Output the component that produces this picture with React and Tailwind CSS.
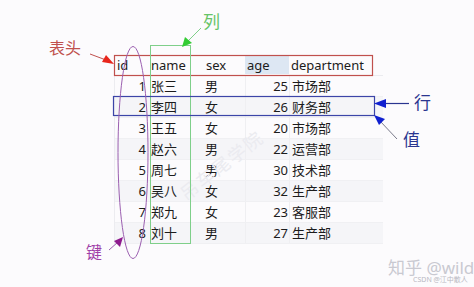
export default function App() {
  const rows = [
    [1, '张三', '男', 25, '市场部'],
    [2, '李四', '女', 26, '财务部'],
    [3, '王五', '女', 20, '市场部'],
    [4, '赵六', '男', 22, '运营部'],
    [5, '周七', '男', 30, '技术部'],
    [6, '吴八', '女', 32, '生产部'],
    [7, '郑九', '女', 23, '客服部'],
    [8, '刘十', '男', 27, '生产部'],
  ];
  const font = { fontFamily: '"Noto Sans", "Noto Sans CJK SC", sans-serif' };
  return (
    <div className="relative w-[474px] h-[287px] overflow-hidden bg-[#fcfbfd] pt-[55px] pl-[114px]" style={font}>
      <div className="w-[269px] text-[13px] leading-[21px] text-[#1c1c1c]">
        <div className="flex h-[21px] border-b border-[#ebebef]">
          <div className="w-[36px] pl-[3px]">id</div>
          <div className="w-[41px] pl-[1px]">name</div>
          <div className="w-[54px] pl-[15px]">sex</div>
          <div className="w-[44px] flex items-center">
            <div className="w-full h-[18px] leading-[18px] pl-[2px] bg-[#dde7f3]">age</div>
          </div>
          <div className="flex-1 pl-[2px]">department</div>
        </div>
        <div className="border-l border-[#ececf0]">
          {rows.map((r, i) => (
            <div
              key={r[0]}
              className={`flex h-[21px] border-b border-[#f0f0f3] ${i % 2 === 0 ? 'bg-[#fcfbfd]' : 'bg-[#f5f5f8]'}`}
            >
              <div className="w-[35px] pr-[4px] text-right">{r[0]}</div>
              <div className="w-[41px] pl-[1px] border-r border-[#ececf0]">{r[1]}</div>
              <div className="w-[54px] pl-[14px]">{r[2]}</div>
              <div className="w-[44px] pr-[1px] text-right border-l border-[#efeff2]">{r[3]}</div>
              <div className="flex-1 pl-[2px] border-l border-[#efeff2]">{r[4]}</div>
            </div>
          ))}
        </div>
      </div>

      {/* diagonal watermark */}
      <div className="absolute left-[172px] top-[152px] -rotate-[38deg] whitespace-nowrap text-[18px] tracking-[2px] text-[#ebebf0]">
        吊车尾学院
      </div>

      {/* annotations */}
      <svg className="absolute inset-0 pointer-events-none" width="474" height="287" viewBox="0 0 474 287">
        <rect x="114.5" y="55.5" width="258" height="20" fill="none" stroke="#c0504d" strokeWidth="1.2" />
        <rect x="150.5" y="45.5" width="40" height="198" fill="none" stroke="#7fcf8a" strokeWidth="1" />
        <rect x="113.5" y="96.5" width="261" height="19" fill="none" stroke="#3c45a8" strokeWidth="1.2" />
        <ellipse cx="133" cy="152.5" rx="15" ry="106" fill="none" stroke="#9b5fb0" strokeWidth="1" />

        <line x1="90" y1="54" x2="106" y2="60" stroke="#c0504d" strokeWidth="1" />
        <polygon points="114,64 102,62 106,55" fill="#e8261c" />
        <line x1="201" y1="28" x2="188" y2="41" stroke="#7fcf8a" strokeWidth="1" />
        <polygon points="182,47 185,37 192,43" fill="#33cc33" />
        <line x1="409" y1="103.5" x2="382" y2="103.5" stroke="#2a3590" strokeWidth="1.2" />
        <polygon points="374,103.5 386,99 386,108" fill="#1020d0" />
        <line x1="397" y1="139" x2="380" y2="121" stroke="#7a7a8a" strokeWidth="1" />
        <polygon points="374,115 385,119 379,125" fill="#1020d0" />
        <line x1="109" y1="250" x2="118" y2="242" stroke="#9b5fb0" strokeWidth="1" />
        <polygon points="123,237 120,247 114,241" fill="#8e1a8e" />
      </svg>

      <div className="absolute left-[49px] top-[38px] whitespace-nowrap text-[16px] leading-[20px] text-[#c0504d]">表头</div>
      <div className="absolute left-[203px] top-[11px] whitespace-nowrap text-[17px] leading-[22px] text-[#66c466]">列</div>
      <div className="absolute left-[414px] top-[92px] whitespace-nowrap text-[17px] leading-[22px] text-[#2a3590]">行</div>
      <div className="absolute left-[403px] top-[129px] whitespace-nowrap text-[17px] leading-[22px] text-[#2a3590]">值</div>
      <div className="absolute left-[86px] top-[241px] whitespace-nowrap text-[16px] leading-[22px] text-[#a040a8]">键</div>

      <div className="absolute left-[388px] top-[257px] whitespace-nowrap text-[17px] leading-[22px] text-[#c9c9d1]">知乎 @wild</div>
      <div className="absolute left-[413px] top-[275px] whitespace-nowrap text-[7px] leading-[10px] text-[#b9b9c2]">CSDN @江中散人</div>
    </div>
  );
}
